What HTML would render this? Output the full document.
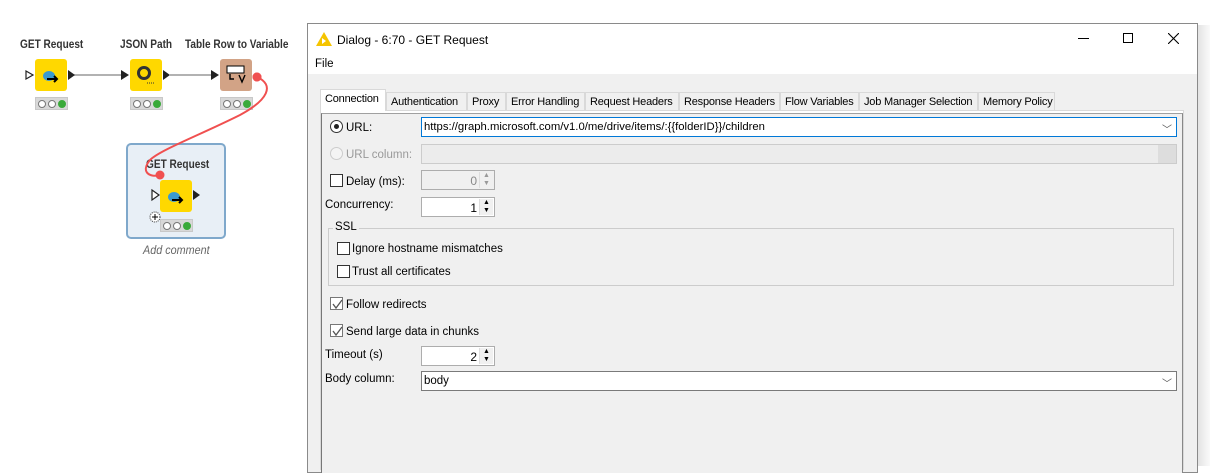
<!DOCTYPE html>
<html><head><meta charset="utf-8"><style>
*{box-sizing:border-box;margin:0;padding:0}
body{width:1210px;height:466px;background:#fff;position:relative;overflow:hidden;font-family:"Liberation Sans",sans-serif;font-size:12px;color:#000}
.a{position:absolute}
.lbl{position:absolute;font-weight:bold;font-size:12px;color:#333;white-space:nowrap;transform:scaleX(0.84);transform-origin:left top}
.node{position:absolute;width:32px;height:32px;border-radius:3px;background:#ffd800}
.st{position:absolute;width:33px;height:13px;background:#d8d8d8;border:1px solid #c8c8c8}
.st i{position:absolute;top:2px;width:8px;height:8px;border-radius:50%;background:#fff;border:1px solid #777}
.tab{position:absolute;top:92px;height:19px;border:1px solid #d9d9d9;border-bottom:none;background:#f0f0f0;font-size:11px;padding:3px 0 0 4px;white-space:nowrap;overflow:hidden;letter-spacing:-0.2px}
.t{position:absolute;font-size:11.5px;white-space:nowrap;margin-top:2px}
.in .t{margin-top:0}
.cb{position:absolute;width:13px;height:13px;border:1px solid #333;background:#fff}
.cbc{border-color:#777}
.in{position:absolute;background:#fff;border:1px solid #7a7a7a;height:20px}
.spin{position:absolute;width:74px;height:20px;border:1px solid #adadad;background:#fff}
.spin .v{position:absolute;right:17px;top:3px;font-size:12px}
.spin .b{position:absolute;right:1px;top:1px;width:14px;height:16px;background:#f0f0f0;border-left:1px solid #ddd}
.chev{position:absolute;right:4px;top:3px;font-size:10px;color:#555}
</style></head><body>
<div class="lbl" style="left:20px;top:37px">GET Request</div>
<div class="lbl" style="left:120px;top:37px">JSON Path</div>
<div class="lbl" style="left:185px;top:37px">Table Row to Variable</div>
<svg class="a" style="left:0;top:0" width="300" height="260">
<line x1="74" y1="75" x2="124" y2="75" stroke="#999" stroke-width="1.5"/>
<line x1="170" y1="75" x2="214" y2="75" stroke="#999" stroke-width="1.5"/>
<polygon points="26,71 33,75 26,79" fill="#fff" stroke="#222" stroke-width="1.2"/>
<polygon points="68,70 75,75 68,80" fill="#222"/>
<polygon points="121,70 129,75 121,80" fill="#222"/>
<polygon points="163,70 170,75 163,80" fill="#222"/>
<polygon points="211,70 219,75 211,80" fill="#222"/>
<circle cx="257" cy="77" r="4.5" fill="#f05050"/>
</svg>
<div class="node" style="left:35px;top:59px"><svg width="32" height="32"><ellipse cx="14" cy="17" rx="6" ry="5" fill="#3a9ad0"/><path d="M12,20h10M19,17l3,3-3,3" stroke="#000" stroke-width="2" fill="none"/></svg></div>
<div class="node" style="left:130px;top:59px"><svg width="32" height="32"><circle cx="14" cy="14" r="5.5" fill="none" stroke="#333" stroke-width="3"/><path d="M17,24h8" stroke="#333" stroke-dasharray="1,1"/></svg></div>
<div class="node" style="left:220px;top:59px;background:#d2a386"><svg width="32" height="32"><rect x="7" y="7" width="17" height="7" fill="#fff" stroke="#000"/><path d="M10,15v5h4M19,16l3,7 3,-7" stroke="#000" stroke-width="1.4" fill="none"/></svg></div>
<div class="st" style="left:35px;top:97px"><i style="left:2px"></i><i style="left:12px"></i><i style="left:22px;background:#3aaa3a;border-color:#3aaa3a"></i></div>
<div class="st" style="left:130px;top:97px"><i style="left:2px"></i><i style="left:12px"></i><i style="left:22px;background:#3aaa3a;border-color:#3aaa3a"></i></div>
<div class="st" style="left:220px;top:97px"><i style="left:2px"></i><i style="left:12px"></i><i style="left:22px;background:#3aaa3a;border-color:#3aaa3a"></i></div>
<div class="a" style="left:126px;top:143px;width:100px;height:96px;background:#e8eff6;border:2px solid #7fa8cb;border-radius:5px"></div>
<div class="lbl" style="left:146px;top:157px">GET Request</div>
<svg class="a" style="left:0;top:0" width="300" height="260"><path d="M257,77 C275,85 268,100 240,115 C200,135 160,150 150,160 C140,172 150,178 160,175" fill="none" stroke="#f05050" stroke-width="2"/><circle cx="257" cy="77" r="4.5" fill="#f05050"/><circle cx="160" cy="175" r="4.5" fill="#f05050"/><polygon points="152,190 159,195 152,200" fill="#fff" stroke="#222" stroke-width="1.2"/><polygon points="193,190 200,195 193,200" fill="#222"/><circle cx="155" cy="217" r="5" fill="#fff" stroke="#333" stroke-dasharray="1,1"/><path d="M152,217h6M155,214v6" stroke="#000"/></svg>
<div class="node" style="left:160px;top:180px"><svg width="32" height="32"><ellipse cx="14" cy="17" rx="6" ry="5" fill="#3a9ad0"/><path d="M12,20h10M19,17l3,3-3,3" stroke="#000" stroke-width="2" fill="none"/></svg></div>
<div class="st" style="left:160px;top:219px"><i style="left:2px"></i><i style="left:12px"></i><i style="left:22px;background:#3aaa3a;border-color:#3aaa3a"></i></div>
<div class="a" style="left:143px;top:243px;font-style:italic;color:#666;font-size:12px;transform:scaleX(0.9);transform-origin:left top">Add comment</div>
<div class="a" style="left:1197px;top:25px;width:13px;height:441px;background:linear-gradient(90deg,#e2e2e2,#fafafa)"></div>
<div class="a" style="left:307px;top:23px;width:891px;height:450px;border:1px solid #8a8a8a;background:#f0f0f0">
 <div class="a" style="left:0;top:0;width:889px;height:50px;background:#fff"></div>
</div>
<svg class="a" style="left:316px;top:32px" width="16" height="14"><polygon points="8,0 16,14 0,14" fill="#f5c400"/><polygon points="6,6 10,9 6,12" fill="#fff"/></svg>
<div class="t" style="left:337px;top:31px;font-size:12px">Dialog - 6:70 - GET Request</div>
<div class="t" style="left:315px;top:56px">File</div>
<div class="a" style="left:1078px;top:38px;width:11px;height:1px;background:#000"></div>
<div class="a" style="left:1123px;top:33px;width:10px;height:10px;border:1px solid #000"></div>
<svg class="a" style="left:1168px;top:33px" width="11" height="11"><path d="M0,0L11,11M11,0L0,11" stroke="#000" stroke-width="1.1"/></svg>
<div class="tab" style="left:320px;top:89px;height:22px;width:66px;background:#fff;z-index:2;font-size:11px">Connection</div>
<div class="tab" style="left:386px;width:81px">Authentication</div>
<div class="tab" style="left:467px;width:39px">Proxy</div>
<div class="tab" style="left:506px;width:79px">Error Handling</div>
<div class="tab" style="left:585px;width:94px">Request Headers</div>
<div class="tab" style="left:679px;width:101px">Response Headers</div>
<div class="tab" style="left:780px;width:79px">Flow Variables</div>
<div class="tab" style="left:859px;width:119px">Job Manager Selection</div>
<div class="tab" style="left:978px;width:77px">Memory Policy</div>
<div class="a" style="left:320px;top:110px;width:864px;height:360px;background:#fff;border:1px solid #d9d9d9"></div>
<div class="a" style="left:321px;top:113px;width:862px;height:360px;background:#f0f0f0;border-left:1px solid #777;border-top:1px solid #a0a0a0;border-right:1px solid #888"></div>
<div class="a" style="left:330px;top:120px;width:13px;height:13px;border-radius:50%;border:1px solid #333;background:#fff"><div class="a" style="left:3px;top:3px;width:5px;height:5px;border-radius:50%;background:#222"></div></div>
<div class="t" style="left:346px;top:120px">URL:</div>
<div class="in" style="left:421px;top:117px;width:756px;border-color:#0078d7"><span class="t" style="left:2px;top:3px;font-size:11.3px">https://graph.microsoft.com/v1.0/me/drive/items/:{{folderID}}/children</span><span class="chev">﹀</span></div>
<div class="a" style="left:330px;top:147px;width:13px;height:13px;border-radius:50%;border:1px solid #ccc;background:#f4f4f4"></div>
<div class="t" style="left:346px;top:147px;color:#999">URL column:</div>
<div class="in" style="left:421px;top:144px;width:756px;background:#ececec;border-color:#ccc"><div class="a" style="right:0;top:0;width:18px;height:18px;background:#ddd"></div></div>
<div class="cb" style="left:330px;top:174px"></div>
<div class="t" style="left:346px;top:174px">Delay (ms):</div>
<div class="spin" style="left:421px;top:170px;background:#f0f0f0"><span class="v" style="color:#888">0</span><span class="b" style="font-size:7px;color:#999;line-height:8px;text-align:center">▲<br>▼</span></div>
<div class="t" style="left:325px;top:197px">Concurrency:</div>
<div class="spin" style="left:421px;top:197px"><span class="v">1</span><span class="b" style="font-size:7px;line-height:8px;text-align:center">▲<br>▼</span></div>
<div class="a" style="left:328px;top:228px;width:846px;height:58px;border:1px solid #ccc"></div>
<div class="t" style="left:333px;top:219px;background:#f0f0f0;padding:0 2px">SSL</div>
<div class="cb" style="left:337px;top:242px"></div>
<div class="t" style="left:352px;top:241px">Ignore hostname mismatches</div>
<div class="cb" style="left:337px;top:265px"></div>
<div class="t" style="left:352px;top:264px">Trust all certificates</div>
<div class="cb cbc" style="left:330px;top:297px"><svg class="a" style="left:1px;top:1px" width="11" height="11"><path d="M1,5 L4,9 L10,1" stroke="#555" fill="none" stroke-width="1.3"/></svg></div>
<div class="t" style="left:346px;top:297px">Follow redirects</div>
<div class="cb cbc" style="left:330px;top:324px"><svg class="a" style="left:1px;top:1px" width="11" height="11"><path d="M1,5 L4,9 L10,1" stroke="#555" fill="none" stroke-width="1.3"/></svg></div>
<div class="t" style="left:346px;top:324px">Send large data in chunks</div>
<div class="t" style="left:325px;top:347px">Timeout (s)</div>
<div class="spin" style="left:421px;top:346px"><span class="v">2</span><span class="b" style="font-size:7px;line-height:8px;text-align:center">▲<br>▼</span></div>
<div class="t" style="left:325px;top:371px">Body column:</div>
<div class="in" style="left:421px;top:371px;width:756px"><span class="t" style="left:2px;top:3px">body</span><span class="chev">﹀</span></div>
</body></html>
